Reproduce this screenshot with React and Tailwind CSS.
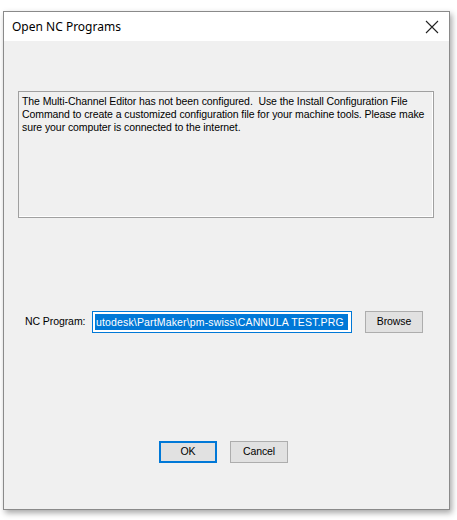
export default function App() {
  return (
    <div className="h-[520px] w-[457px] bg-white pt-[11px] pl-[3px]">
      {/* dialog window */}
      <div className="flex h-[499px] w-[447px] flex-col border border-[#8a8a8a] bg-[#f0f0f0] shadow-[2px_3px_6px_rgba(0,0,0,0.35)]">
        {/* title bar */}
        <div className="flex h-[29px] items-center justify-between bg-white pl-[8px] pr-[9px]">
          <span className="text-[12px] text-black" style={{ fontFamily: '"Noto Sans", sans-serif' }}>
            Open NC Programs
          </span>
          <svg width="14" height="14" viewBox="0 0 14 14" className="mr-[1px]">
            <path d="M1 1L13 13M13 1L1 13" stroke="#222" strokeWidth="1.1" fill="none" />
          </svg>
        </div>

        <div
          className="flex flex-1 flex-col px-[14px] text-[10.5px] tracking-[-0.08px] text-black"
          style={{ fontFamily: '"Liberation Sans", Arial, sans-serif' }}
        >
          {/* message box */}
          <div className="mt-[50px] h-[127px] w-[416px] whitespace-nowrap border border-[#a0a0a0] bg-[#f0f0f0] px-[3px] pt-[3px] leading-[13px] shadow-[inset_-1px_-1px_0_#fff]">
            <div>The Multi-Channel Editor has not been configured.&nbsp; Use the Install Configuration File</div>
            <div>Command to create a customized configuration file for your machine tools. Please make</div>
            <div>sure your computer is connected to the internet.</div>
          </div>

          {/* NC program row */}
          <div className="mt-[93px] flex items-center">
            <span className="ml-[7px] w-[67px]">NC Program:</span>
            <div className="flex h-[22px] w-[260px] items-center border border-[#0078d7] bg-white px-[2px]">
              <span className="whitespace-nowrap bg-[#0078d7] px-[1px] leading-[16px] tracking-[0.15px] text-white">
                utodesk\PartMaker\pm-swiss\CANNULA TEST.PRG&nbsp;
              </span>
            </div>
            <button className="ml-[13px] flex h-[22px] w-[58px] items-center justify-center border border-[#adadad] bg-[#e1e1e1] text-black">
              Browse
            </button>
          </div>

          {/* OK / Cancel */}
          <div className="mt-[108px] flex pl-[141px]">
            <button className="flex h-[22px] w-[58px] items-center justify-center border-2 border-[#0078d7] bg-[#e1e1e1]">
              OK
            </button>
            <button className="ml-[13px] flex h-[22px] w-[58px] items-center justify-center border border-[#adadad] bg-[#e1e1e1]">
              Cancel
            </button>
          </div>
        </div>
      </div>
    </div>
  );
}
